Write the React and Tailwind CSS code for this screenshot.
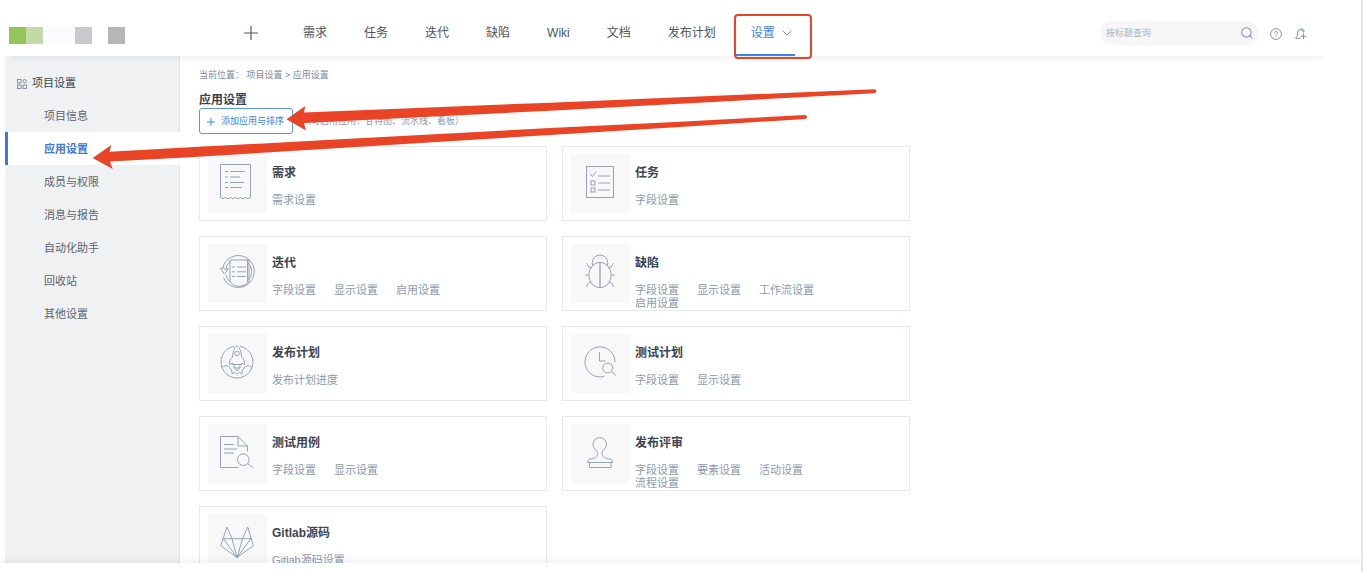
import React, { useState } from 'react';
import { ChevronDown, Plus, Search } from 'lucide-react';

const NAV_ITEMS = ['需求', '任务', '迭代', '缺陷', 'Wiki', '文档', '发布计划'];

const SIDEBAR_ITEMS = [
  '项目信息',
  '应用设置',
  '成员与权限',
  '消息与报告',
  '自动化助手',
  '回收站',
  '其他设置',
];

const LOGO_BLOCKS = [
  'w-[17px] bg-[#97c35b]',
  'w-[17px] bg-[#c2daa5]',
  'w-4 bg-[#fafbfe]',
  'w-4 bg-[#fafbfe]',
  'w-[17px] bg-[#c9c8cd]',
  'w-4 bg-white',
  'w-[17px] bg-[#b7b7ba]',
];

const APP_ICONS = {
  story: (
    <>
      <path d="M12.5 43.5V10.5H42.5V43.5" />
      <path d="M12.5 43.5q2.5 2.5 5 0q2.5 2.5 5 0q2.5 2.5 5 0q2.5 2.5 5 0q2.5 2.5 5 0q2.5 2.5 5 0" />
      <path d="M17 17.5h3M22 17.5h15M17 23h3M22 23h10M17 28.5h3M22 28.5h14M17 33.5h3M22 33.5h12" />
    </>
  ),
  task: (
    <>
      <rect x="15.5" y="12.5" width="27" height="31" />
      <path d="M19 20l2.5 2.5L25 17.5M27 22h12M27 29h12M27 36h12" />
      <rect x="20" y="27" width="4" height="4" />
      <rect x="20" y="34" width="4" height="4" />
    </>
  ),
  iteration: (
    <>
      <path d="M14.6 24.5A16 16 0 1 1 15.5 33.5" />
      <path d="M17.8 25.500A13 13 0 0 1 22 17.500M40.5 19A13 13 0 0 1 40.5 36M22 37.5A13 13 0 0 1 18 31" />
      <path d="M12.5 24.5l4 5.5 4-5.5-3 1.2-2.300-1.700z" />
      <path d="M22 38V16h19v22q-5 4.5-10 4.5T22 38" />
      <path d="M39.5 16v22M24 23h3M29 23h9M24 27.8h3M29 27.8h9M24 32.5h3M29 32.5h9" />
    </>
  ),
  release: (
    <>
      <path d="M26 12.3A16 16 0 1 0 32 12.3" />
      <path d="M24.5 30.5V29l-3 1.5c-.3-3 .7-5.5 3-7.5 0-5 1.5-9 4.5-11.5 3 2.5 4.5 6.5 4.5 11.5 2.3 2 3.3 4.5 3 7.5l-3-1.5v1.5z" />
      <circle cx="29" cy="19.5" r="2.3" />
      <path d="M26 30.5v2l3 2 3-2v-2M25.5 33l3.5 4 3.5-4" />
      <path d="M14 33.500c3.500-3 7-2 8.500 1.500 1.500 1 1.500 3 1.500 5l2.500-2 2.500 2.500 2.500-2.500 2.500 2c0-2 0-4 1.500-5 1.500-3.500 5-4.500 8.500-1.500" />
    </>
  ),
  bug: (
    <>
      <path d="M22 22a7.7 7.7 0 1 1 14 0" />
      <ellipse cx="29" cy="31" rx="11.2" ry="12.7" />
      <path d="M28.5 18.5v25M29.5 18.5v25" strokeWidth="0.6" />
      <path d="M20.5 24l-3.5-2-1.5-3M37.5 24l3.5-2 1.5-3M17.5 31H14M40.5 31H44M20 37.5l-3 2-1.5 3.5M38 37.5l3 2 1.5 3.5" />
    </>
  ),
  testPlan: (
    <>
      <path d="M44 28A15 15 0 1 0 33.3 42.3" />
      <path d="M28.5 18v9h6" />
      <circle cx="36.7" cy="34" r="5" />
      <path d="M40.5 37.5l4.5 4" />
    </>
  ),
  testCase: (
    <>
      <path d="M39.5 27.5V22L30 12.5H12.5v31h18M30 12.5V22h9.5" />
      <path d="M16 20.5h10M16 25h13M16 29h10" />
      <circle cx="35.3" cy="35.7" r="5.8" />
      <path d="M39.5 39.5l6 4.5" />
    </>
  ),
  review: (
    <>
      <path d="M26.5 29.5c0-2-1-3-2.5-4.5a6.7 6.7 0 1 1 9.5 0c-1.5 1.5-2.5 2.5-2.5 4.5 0 3.5 3 5 8 5.5 1.8.2 2.7 1.5 2.7 3.5h-25c0-2 .9-3.3 2.7-3.5 4.5-.5 7.1-2 7.1-5.5z" />
      <path d="M18.5 38.5v5H40v-5" />
    </>
  ),
  gitlab: (
    <>
      <path d="M29 43.5L12.7 31.7 19 13l5 11.7L29 43.5l5.5-18.8L39.7 13l5.6 18.7z" />
      <path d="M14.7 24.7h29M15.5 24.7L29 43.5M42.7 24.7L29 43.5" />
    </>
  ),
};

const APPS = [
  { icon: 'story', title: '需求', links: ['需求设置'] },
  { icon: 'task', title: '任务', links: ['字段设置'] },
  { icon: 'iteration', title: '迭代', links: ['字段设置', '显示设置', '启用设置'] },
  { icon: 'bug', title: '缺陷', links: ['字段设置', '显示设置', '工作流设置', '启用设置'] },
  { icon: 'release', title: '发布计划', links: ['发布计划进度'] },
  { icon: 'testPlan', title: '测试计划', links: ['字段设置', '显示设置'] },
  { icon: 'testCase', title: '测试用例', links: ['字段设置', '显示设置'] },
  { icon: 'review', title: '发布评审', links: ['字段设置', '要素设置', '活动设置', '流程设置'] },
  { icon: 'gitlab', title: 'Gitlab源码', links: ['Gitlab源码设置'] },
];

const Header = () => (
  <header className="relative z-10 mr-[33px] flex h-14 shrink-0 bg-white pt-2.5 shadow-[0_8px_6px_-6px_rgba(0,0,0,0.07)]">
    <div className="flex w-[235px] shrink-0 items-center pl-1">
      {LOGO_BLOCKS.map((color, i) => (
        <span key={i} className={`mt-[5px] h-[17px] ${color}`} />
      ))}
    </div>
    <nav className="flex items-center gap-[37px] text-[12px] text-[#4d5561]">
      <button type="button" aria-label="新建" className="mr-1">
        <Plus className="h-[22px] w-[22px]" strokeWidth={1.3} />
      </button>
      {NAV_ITEMS.map((item) => (
        <a key={item} href="#" className="whitespace-nowrap">
          {item}
        </a>
      ))}
      <button
        type="button"
        className="relative -ml-[17px] flex h-full items-center gap-1 border-b-2 border-[#3f82f0] pt-0.5 pl-[15px] whitespace-nowrap text-[#3f82f0]"
      >
        设置
        <ChevronDown className="h-4 w-4 text-[#8492a6]" strokeWidth={1.5} />
        <span className="absolute -right-[17px] -bottom-[5px] -left-[2px] h-[45px] rounded-[4px] border-2 border-[#ea4427]" />
      </button>
    </nav>
    <div className="ml-auto flex items-center pr-[21px] text-[#8492a6]">
      <div className="flex h-6 w-[159px] items-center rounded-full bg-[#f7f7f7] pr-[5px] pl-1.5">
        <input
          type="search"
          aria-label="按标题查询"
          placeholder="按标题查询"
          className="h-6 w-full min-w-0 bg-transparent text-[9px] outline-none placeholder:text-[#a9b3c1]"
        />
        <Search className="h-3.5 w-3.5 shrink-0" strokeWidth={1.8} />
      </div>
      <button type="button" aria-label="帮助" className="ml-[11px]">
        <svg viewBox="0 0 12 12" className="mt-0.5 h-3 w-3" fill="none" stroke="currentColor" strokeWidth="1">
          <circle cx="6" cy="6" r="5.4" />
          <path d="M4.5 4.9a1.5 1.5 0 1 1 2.2 1.3q-.7.3-.7 1M6 8.2v.9" />
        </svg>
      </button>
      <button type="button" aria-label="通知" className="ml-[13px]">
        <svg viewBox="0 0 12 12" className="mt-0.5 h-3 w-3" fill="none" stroke="currentColor" strokeWidth="1">
          <path d="M5.5 10.3H.8V9.5q1.7-.5 1.7-2.5V4.8A3 3 0 0 1 8.5 4.5M5 1.2q1.5-1.2 3.3.3.9 1 .7 2.5M8.500 5.500v5.500M5.800 8.300h5.700" />
        </svg>
      </button>
    </div>
  </header>
);

const Sidebar = ({ active, onSelect }) => (
  <aside className="w-[175px] shrink-0 border-r border-[#e2e5e8] bg-[#eff1f3] pt-2.5 text-[11px] text-[#5b636e]">
    <div className="flex h-[33px] items-center gap-[5px] pt-0.5 pl-3 text-[#3c434d]">
      <svg viewBox="0 0 10 10" className="h-2.5 w-2.5" fill="none" stroke="#7d8794" strokeWidth="0.9">
        <rect x="0.5" y="0.5" width="3.5" height="3.5" />
        <circle cx="7.7" cy="2.2" r="1.7" />
        <rect x="0.5" y="6" width="3.5" height="3.5" />
        <rect x="6" y="6" width="3.5" height="3.5" />
      </svg>
      项目设置
    </div>
    <ul className="-mr-px">
      {SIDEBAR_ITEMS.map((item) => (
        <li key={item}>
          <button
            type="button"
            onClick={() => onSelect(item)}
            className={`flex h-[33px] w-full items-center border-l-[3px] pt-0.5 pl-9 ${
              item === active
                ? 'border-[#4077dc] bg-white font-bold text-[#4077dc]'
                : 'border-transparent'
            }`}
          >
            {item}
          </button>
        </li>
      ))}
    </ul>
  </aside>
);

const AppCard = ({ icon, title, links }) => (
  <section className="flex h-[75px] gap-[5px] border border-[#e6eaf0] px-2 py-[7px]">
    <div className="h-[59px] w-[59px] shrink-0 bg-[#f8f8f8]">
      <svg viewBox="0 0 59 59" className="h-full w-full" fill="none" stroke="#8c98ab" strokeWidth="0.9">
        {APP_ICONS[icon]}
      </svg>
    </div>
    <div className="max-w-[225px] pt-2.5">
      <h3 className="text-[12px] leading-[18px] font-bold text-[#3c444f]">{title}</h3>
      <div className="mt-3 flex flex-wrap gap-x-[18px] text-[11px] leading-[13px] text-[#8d99ad]">
        {links.map((link) => (
          <a key={link} href="#">
            {link}
          </a>
        ))}
      </div>
    </div>
  </section>
);

// Red pointers drawn over the page, from the content to the button and the menu entry
const Pointers = () => (
  <svg className="pointer-events-none absolute top-0 left-0 z-20 h-[180px] w-[900px]" viewBox="0 0 900 180" fill="#ea4427">
    <path d="M286.5 119.3L305.3 106 304 112.5 550 102.7 680 97.3 874 89.2Q876.5 89.2 876.5 91T874 93.2L680 103.7 550 110.7 304 123 306 130.5z" />
    <path d="M92.7 158L111.3 145 109.5 151.7 190 147.3 340 139.3 550 128 680 121.7 805 115Q807 115 807 117T805 119L680 127 550 135 340 148 190 157.3 110 161.5 112.7 169z" />
  </svg>
);

export default function App() {
  const [active, setActive] = useState('应用设置');

  return (
    <div className="relative flex h-screen flex-col overflow-hidden border-r-2 border-[#f3e5cb] bg-white pl-[5px] font-['Liberation_Sans','Noto_Sans_CJK_SC',sans-serif]">
      <Header />
      <div className="flex min-h-0 flex-1 overflow-hidden">
        <Sidebar active={active} onSelect={setActive} />
        <main className="min-w-0 flex-1 pt-3 pl-[19px]">
          <p className="text-[9px] leading-[14px] text-[#7f8b9d]">当前位置： 项目设置 &gt; 应用设置</p>
          <h2 className="mt-2.5 text-[12px] leading-4 font-bold text-[#3c444f]">应用设置</h2>
          <div className="flex items-center gap-[9px] text-[9px] text-[#8d99ad]">
            <button
              type="button"
              className="flex h-[26px] w-[94px] items-center gap-1 rounded-[3px] border border-[#5a93f5] pt-0.5 pl-[5px] whitespace-nowrap text-[#3f82f0]"
            >
              <Plus className="h-3 w-3" strokeWidth={2} />
              添加应用与排序
            </button>
            <span className="pt-0.5">（可启用应用：甘特图、流水线、看板）</span>
          </div>
          <div className="mt-3 grid max-w-[711px] grid-cols-2 gap-[15px]">
            {APPS.map((app) => (
              <AppCard key={app.title} {...app} />
            ))}
          </div>
        </main>
      </div>
      <footer className="relative z-10 -ml-[5px] h-[9px] shrink-0 bg-white shadow-[0_-2px_8px_rgba(0,0,0,0.07)]" />
      <Pointers />
    </div>
  );
}
